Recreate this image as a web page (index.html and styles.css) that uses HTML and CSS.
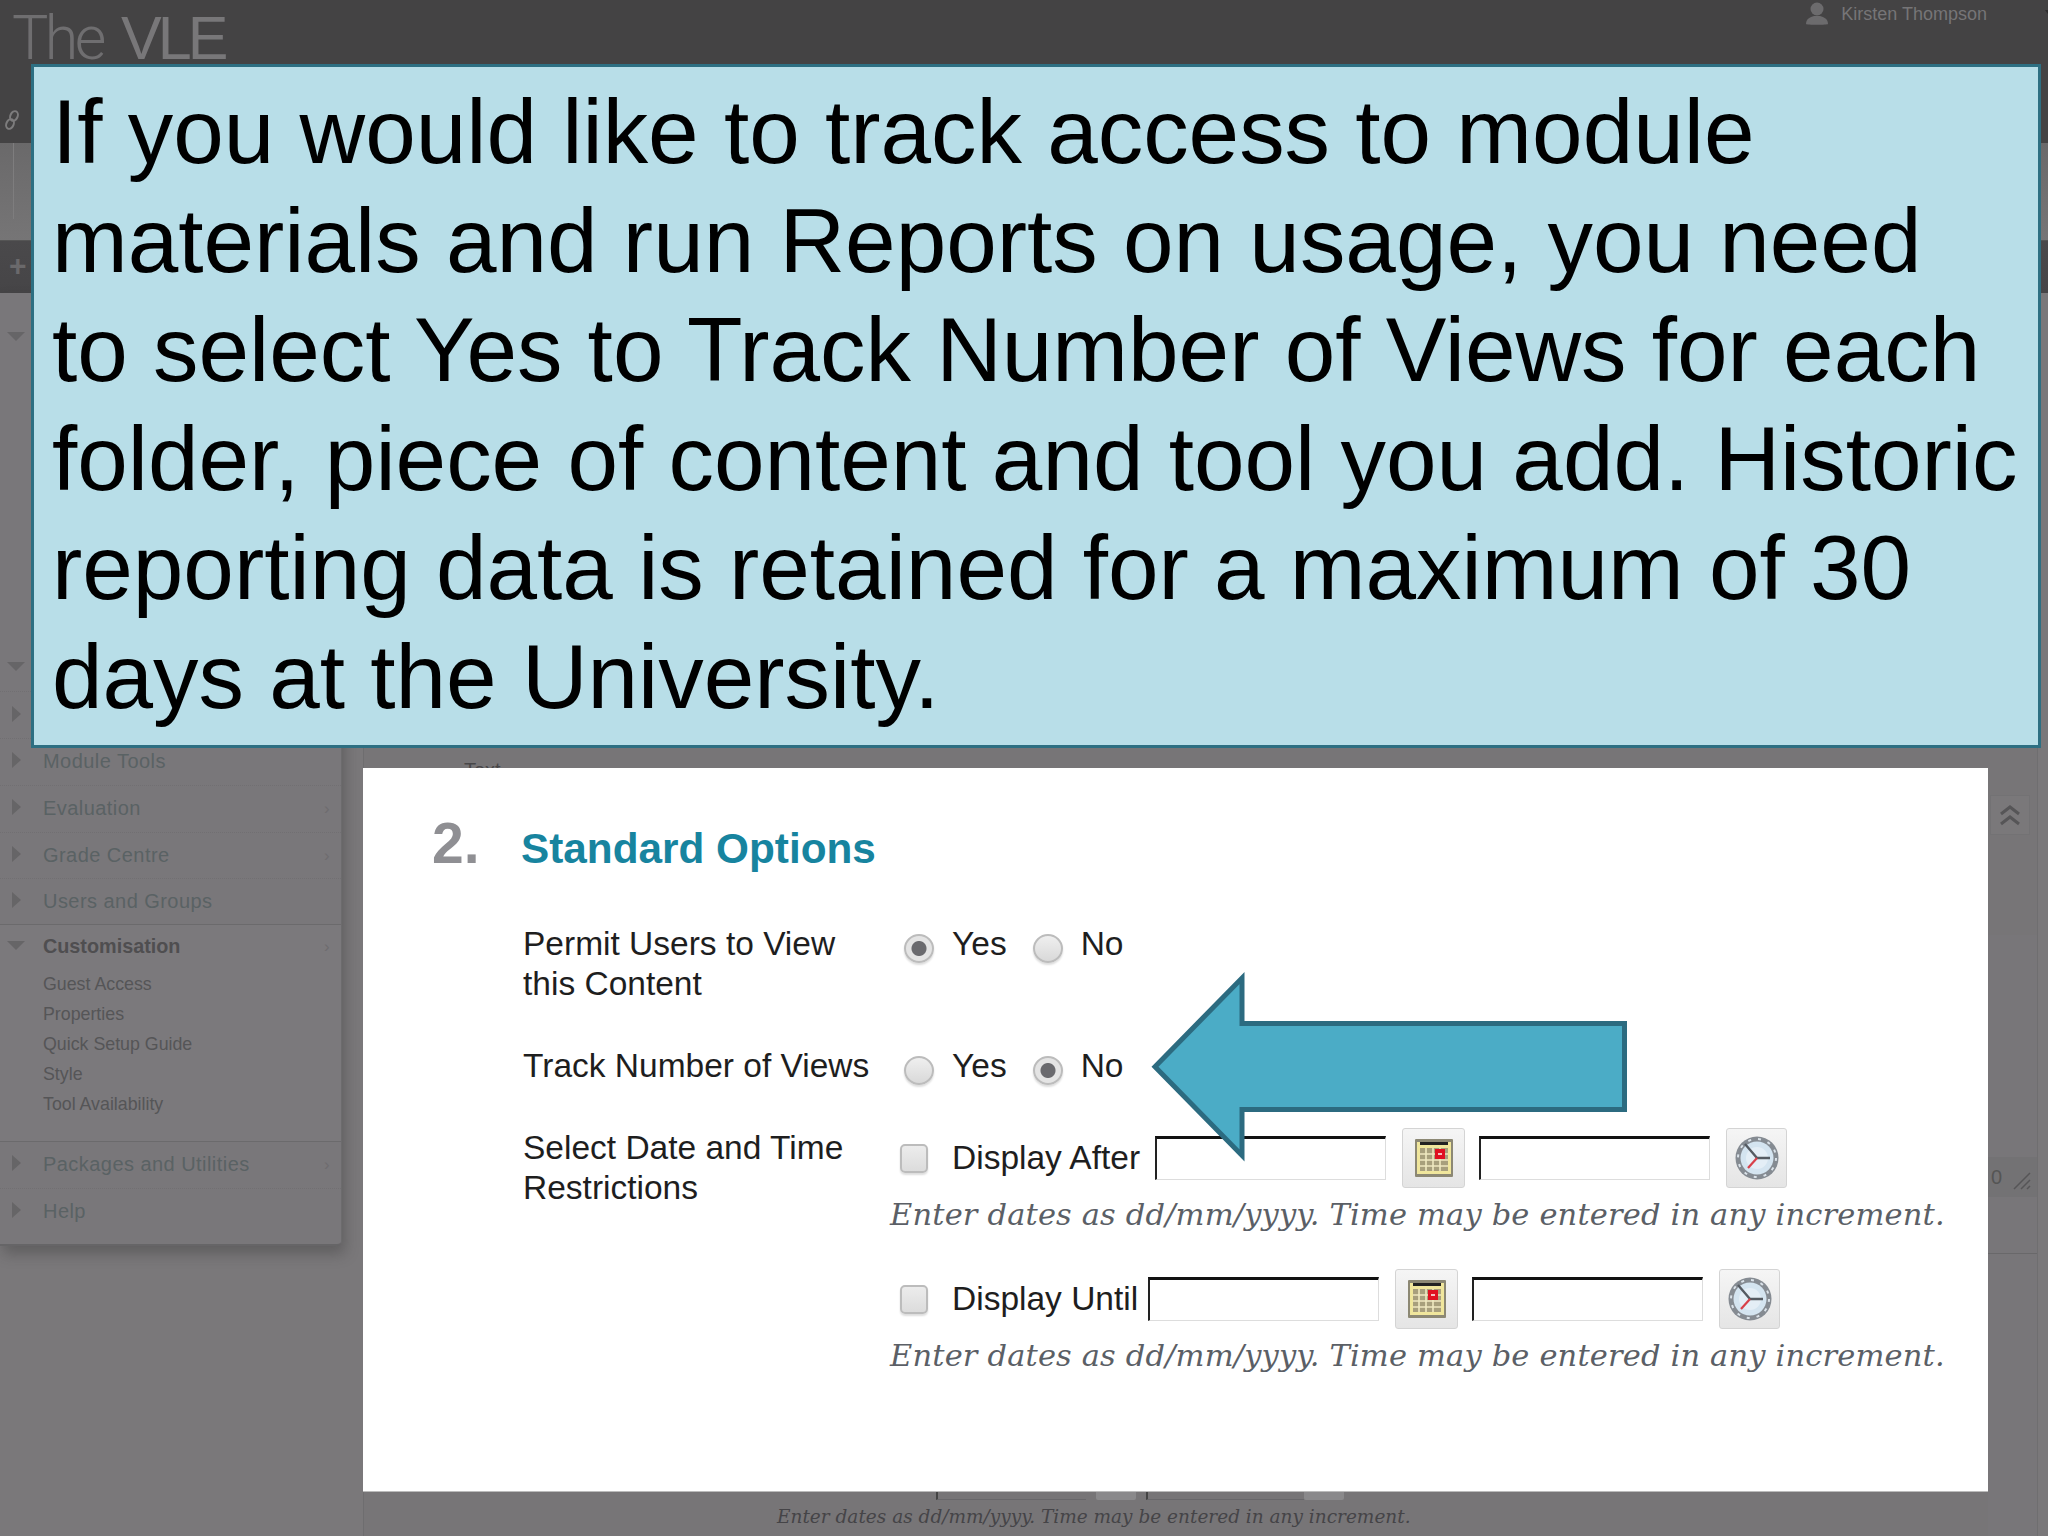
FILE: index.html
```html
<!DOCTYPE html>
<html lang="en">
<head>
<meta charset="utf-8">
<title>The VLE - Standard Options</title>
<link rel="stylesheet" href="styles.css">
</head>
<body>
<div class="slide">
  <header class="topbar">
    <div class="brand"><span class="brand-thin">The</span> <span class="brand-bold">VLE</span></div>
    <div class="user">
      <svg class="user-icon" viewBox="0 0 24 24"><circle cx="12" cy="8" r="6.5"/><path d="M1 23c0-5 4-7 8-8h6c4 1 8 3 8 8 0 1-22 1-22 0z"/></svg>
      <span>Kirsten Thompson</span>
      <i class="user-caret"></i>
    </div>
  </header>
  <div class="linkbar">
    <svg class="link-icon" viewBox="0 0 16 20"><g fill="none" stroke="#7d7c7d" stroke-width="2"><ellipse cx="10" cy="6" rx="3.6" ry="5" transform="rotate(25 10 6)"/><ellipse cx="6" cy="14" rx="3.6" ry="5" transform="rotate(25 6 14)"/></g></svg>
  </div>
  <div class="breadcrumb"><i class="crumb-line"></i></div>
  <div class="toolbar"><span class="plus">+</span></div>
  <div class="workspace">
    <nav class="sidebar">
      <div class="side-top"><i class="tri-down"></i></div>
      <div class="side-gap"></div>
      <div class="side-row"><i class="tri-down"></i></div>
      <div class="side-row"><i class="tri-right"></i></div>
      <div class="side-row"><i class="tri-right"></i><span>Module Tools</span></div>
      <div class="side-row"><i class="tri-right"></i><span>Evaluation</span><b class="more">›</b></div>
      <div class="side-row"><i class="tri-right"></i><span>Grade Centre</span><b class="more">›</b></div>
      <div class="side-row side-last"><i class="tri-right"></i><span>Users and Groups</span></div>
      <section class="side-open">
        <div class="side-head"><i class="tri-down"></i><strong>Customisation</strong><b class="more">›</b></div>
        <ul class="side-sub">
          <li>Guest Access</li>
          <li>Properties</li>
          <li>Quick Setup Guide</li>
          <li>Style</li>
          <li>Tool Availability</li>
        </ul>
      </section>
      <div class="side-row"><i class="tri-right"></i><span>Packages and Utilities</span><b class="more">›</b></div>
      <div class="side-row side-end"><i class="tri-right"></i><span>Help</span></div>
    </nav>
    <main class="main">
      <div class="content">
        <div class="ghost-label">Text</div>
        <div class="ghost-row">
          <i class="ghost-input"></i><i class="ghost-btn"></i><i class="ghost-input wide"></i><i class="ghost-btn flush"></i>
        </div>
        <div class="ghost-hint">Enter dates as dd/mm/yyyy. Time may be entered in any increment.</div>
      </div>
      <aside class="rail">
        <div class="rail-top">
          <div class="collapse">
            <svg viewBox="0 0 22 22"><path d="M2 10 11 3l9 7M2 20l9-7 9 7" fill="none" stroke="#565557" stroke-width="3"/></svg>
          </div>
        </div>
        <div class="rail-mid">
          <div class="rail-foot">
            <span class="count">0</span>
            <svg class="resize" viewBox="0 0 18 18"><path d="M1 17 17 1M8 17l9-9M14 17l3-3" fill="none" stroke="#565557" stroke-width="1.5"/></svg>
          </div>
          <div class="rail-line"></div>
        </div>
      </aside>
    </main>
  </div>

  <section class="panel">
    <h2 class="step"><span class="step-num">2.</span><span class="step-title">Standard Options</span></h2>
    <div class="form">
      <div class="form-label">Permit Users to View<br>this Content</div>
      <div class="opts">
        <label class="opt"><input class="radio" type="radio" name="permit" checked>Yes</label>
        <label class="opt"><input class="radio" type="radio" name="permit">No</label>
      </div>
      <div class="form-label">Track Number of Views</div>
      <div class="opts">
        <label class="opt"><input class="radio" type="radio" name="track">Yes</label>
        <label class="opt"><input class="radio" type="radio" name="track" checked>No</label>
      </div>
      <div class="form-label">Select Date and Time<br>Restrictions</div>
      <div class="dates">
        <div class="date-row">
          <label class="check"><input class="checkbox" type="checkbox">Display After</label>
          <input class="field" type="text" aria-label="After date">
          <button class="pick" type="button" aria-label="Calendar">
            <svg class="cal" viewBox="0 0 38 38"><rect width="38" height="38" rx="1" fill="#8c8874"/><rect x="2" y="3" width="34" height="32" fill="#f0e69c"/><rect x="5" y="9" width="28" height="23" fill="#a89f7c"/><path d="M5 3h28v3H5z" fill="#222"/><path d="M11 9v23M18 9v23M25 9v23M5 15h28M5 21h28M5 27h28" stroke="#efe8c0" stroke-width="1.6"/><rect x="20" y="10" width="10" height="10" fill="#e01020"/><rect x="23" y="14" width="4" height="2" fill="#f4c0c0"/></svg>
          </button>
          <input class="field" type="text" aria-label="After time">
          <button class="pick pick-clock" type="button" aria-label="Clock">
            <svg class="clock" viewBox="0 0 44 44"><circle cx="22" cy="22" r="21.5" fill="#858b92"/><circle cx="22" cy="22" r="19" fill="none" stroke="#dbe3ea" stroke-width="2" stroke-dasharray="3 7"/><circle cx="22" cy="22" r="16.5" fill="#d4e4f0"/><circle cx="22" cy="22" r="11" fill="#e4eef6"/><path d="M22 22 10 8M22 22h13" stroke="#555b62" stroke-width="2.4"/><path d="M22 22 13 32" stroke="#d8404a" stroke-width="2.2"/></svg>
          </button>
        </div>
        <p class="hint">Enter dates as dd/mm/yyyy. Time may be entered in any increment.</p>
        <div class="date-row date-until">
          <label class="check"><input class="checkbox" type="checkbox">Display Until</label>
          <input class="field" type="text" aria-label="Until date">
          <button class="pick" type="button" aria-label="Calendar">
            <svg class="cal" viewBox="0 0 38 38"><rect width="38" height="38" rx="1" fill="#8c8874"/><rect x="2" y="3" width="34" height="32" fill="#f0e69c"/><rect x="5" y="9" width="28" height="23" fill="#a89f7c"/><path d="M5 3h28v3H5z" fill="#222"/><path d="M11 9v23M18 9v23M25 9v23M5 15h28M5 21h28M5 27h28" stroke="#efe8c0" stroke-width="1.6"/><rect x="20" y="10" width="10" height="10" fill="#e01020"/><rect x="23" y="14" width="4" height="2" fill="#f4c0c0"/></svg>
          </button>
          <input class="field" type="text" aria-label="Until time">
          <button class="pick pick-clock" type="button" aria-label="Clock">
            <svg class="clock" viewBox="0 0 44 44"><circle cx="22" cy="22" r="21.5" fill="#858b92"/><circle cx="22" cy="22" r="19" fill="none" stroke="#dbe3ea" stroke-width="2" stroke-dasharray="3 7"/><circle cx="22" cy="22" r="16.5" fill="#d4e4f0"/><circle cx="22" cy="22" r="11" fill="#e4eef6"/><path d="M22 22 10 8M22 22h13" stroke="#555b62" stroke-width="2.4"/><path d="M22 22 13 32" stroke="#d8404a" stroke-width="2.2"/></svg>
          </button>
        </div>
        <p class="hint">Enter dates as dd/mm/yyyy. Time may be entered in any increment.</p>
      </div>
    </div>
  </section>

  <svg class="arrow" viewBox="0 0 484 196"><path d="M6 98.75 93 10v45.5h382.5v86H93v46z" fill="#4bacc6" stroke="#2c6b80" stroke-width="5"/></svg>

  <aside class="callout">If you would like to track access to module materials and run Reports on usage, you need<br>to select Yes to Track Number of Views for each folder, piece of content and tool you add. Historic reporting data is retained for a maximum of 30 days at the University.</aside>
</div>
</body>
</html>
```
FILE: styles.css
```css
* { box-sizing: border-box; }
html, body { margin: 0; padding: 0; }
body { width: 2048px; height: 1536px; overflow: hidden; background: #7a787a; font-family: "Liberation Sans", Arial, sans-serif; }
.slide { position: relative; width: 2048px; height: 1536px; display: flex; flex-direction: column; background: #7a787a; }

/* top of the dimmed page */
.topbar { height: 65px; flex: none; display: flex; justify-content: space-between; align-items: flex-start; background: #444344; }
.brand { padding: 0 0 0 12px; font-size: 61px; line-height: 76px; letter-spacing: -3.6px; color: #757476; white-space: nowrap; }
.brand-thin { font-family: Roboto, "Liberation Sans", sans-serif; font-weight: 300; color: #6f6e70; }
.brand-bold { font-weight: 400; color: #787779; letter-spacing: -4px; margin-left: 5px; }
.user { display: flex; align-items: center; gap: 12px; height: 28px; font-size: 18px; color: #767577; white-space: nowrap; margin-right: -4px; }
.user-icon { width: 24px; height: 24px; fill: #6c6b6d; flex: none; margin-top: -2px; }
.user-caret { width: 0; height: 0; margin-left: 46px; border: 6px solid transparent; border-top: 8px solid #2f2e2f; border-bottom: 0; margin-right: -5px; }
.linkbar { height: 78px; flex: none; background: #444344; padding: 45px 0 0 4px; }
.link-icon { display: block; width: 16px; height: 20px; }
.breadcrumb { height: 97px; flex: none; background: linear-gradient(#6a696a, #767576); padding-left: 13px; }
.crumb-line { display: block; width: 1px; height: 76px; background: #7e7d7e; }
.toolbar { height: 53px; flex: none; background: linear-gradient(#4a494b, #464547); padding-left: 9px; border-top: 1px solid #555; }
.plus { font-size: 30px; line-height: 50px; font-weight: 700; color: #6a696b; }

.workspace { flex: 1; display: flex; min-height: 0; }
.sidebar { width: 342px; height: 953px; flex: none; background: #79777a; border-right: 1px solid #6c6b6d; border-bottom: 2px solid #666567; border-radius: 0 0 5px 0; box-shadow: 3px 8px 14px rgba(50, 50, 50, .35); display: flex; flex-direction: column; color: #5a6264; font-size: 20px; letter-spacing: .45px; }
.side-top { height: 90px; display: flex; align-items: center; padding-left: 7px; }
.side-gap { height: 262.5px; }
.side-row { position: relative; height: 46.8px; display: flex; align-items: center; padding-left: 12px; border-bottom: 1px dotted #716f72; }
.side-row span { margin-left: 22px; }
.side-last { height: 44.3px; border-bottom: 0; }
.side-end { border-bottom: 0; }
.tri-right { width: 0; height: 0; flex: none; border-style: solid; border-width: 8px 0 8px 9px; border-color: transparent transparent transparent #666567; margin-top: -3px; }
.tri-down { width: 0; height: 0; flex: none; border-style: solid; border-width: 9px 9px 0; border-color: #666567 transparent transparent; margin-top: -3px; }
.side-row > .tri-down { margin-left: -5px; }
.more { margin-left: auto; margin-right: 11px; color: #6e6c6f; font-weight: 400; font-size: 17px; }
.side-open { border-top: 1px solid #6b6a6c; border-bottom: 1px solid #6b6a6c; height: 218px; background: #7b797c; }
.side-head { height: 44px; display: flex; align-items: center; padding-left: 7px; }
.side-head strong { margin-left: 18px; font-size: 19.8px; letter-spacing: 0; color: #4f4e50; }
.side-sub { margin: 0; padding: 0 0 0 43px; list-style: none; font-size: 17.8px; letter-spacing: 0; color: #555557; }
.side-sub li { height: 30px; line-height: 30px; }

.main { flex: 1; min-width: 0; display: flex; margin: 454px 10px 0 21px; border-left: 1px solid #6e6d6f; background: #777577; }
.content { flex: 1; min-width: 0; position: relative; }
.ghost-label { margin: 12px 0 0 100px; font-size: 20px; line-height: 22px; color: #484749; }
.ghost-row { display: flex; align-items: flex-end; height: 26px; margin: 693px 0 0 572px; }
.ghost-input { width: 150px; height: 20px; border-left: 2px solid #444; border-bottom: 1px solid #68676a; margin-right: 10px; }
.ghost-input.wide { width: 158px; margin-right: 0; margin-left: 10px; }
.ghost-btn { width: 40px; height: 26px; background: #8a898b; border-radius: 2px; }
.ghost-hint { margin: 4px 0 0 413px; font-family: "DejaVu Serif", serif; font-style: italic; font-size: 18.5px; line-height: 26px; color: #454447; white-space: nowrap; }
.rail { width: 50px; flex: none; display: flex; flex-direction: column; border-right: 1px solid #6f6e70; }
.rail-top { height: 188px; padding: 48px 0 0 2px; background: #777577; }
.collapse { width: 40px; height: 40px; display: flex; align-items: center; justify-content: center; background: #7a787a; border: 1px solid #737274; }
.collapse svg { width: 24px; height: 22px; }
.rail-mid { flex: 1; background: #787679; padding-top: 222px; }
.rail-foot { height: 40px; display: flex; align-items: center; justify-content: space-between; padding: 0 6px 0 3px; background: #737274; font-size: 20px; color: #555; }
.resize { width: 18px; height: 18px; margin-top: 8px; }
.rail-line { height: 1px; margin-top: 56px; background: #69686a; }

/* white screenshot panel */
.panel { position: absolute; left: 363px; top: 768px; width: 1625px; height: 724px; background: #fff; border-bottom: 1px solid #bbb; padding: 45px 0 0 69px; }
.step { display: flex; align-items: baseline; margin: 0; font-weight: 700; line-height: 60px; }
.step-num { width: 89px; font-size: 57px; color: #8f8f93; }
.step-title { font-size: 42.3px; color: #17849f; }
.form { display: grid; grid-template-columns: 367px auto; row-gap: 42px; margin: 45px 0 0 91px; font-size: 33.5px; line-height: 40px; color: #1e1e1e; }
.form-label { white-space: nowrap; }
.opts { display: flex; gap: 26px; padding-left: 14px; }
.opt { display: flex; gap: 18px; }
.radio { appearance: none; -webkit-appearance: none; width: 30px; height: 29px; margin: 10px 0 0; border-radius: 50%; border: 2px solid #bcbcbc; background: linear-gradient(#efefef, #d9d9d9); box-shadow: 0 2px 2px #ddd; }
.radio:checked { background: radial-gradient(circle, #6a6a6e 0 7px, #e4e4e4 8px); }
.dates { min-width: 0; }
.date-row { display: flex; align-items: center; gap: 16px; height: 60px; }
.date-until { margin-top: 34px; }
.check { display: flex; align-items: center; gap: 24px; margin-right: -1px; white-space: nowrap; padding-left: 10px; }
.date-until .check { margin-right: -6px; }
.checkbox { appearance: none; -webkit-appearance: none; width: 28px; height: 29px; margin: 0; border-radius: 5px; border: 2px solid #bcbcbc; background: linear-gradient(#ececec, #dcdcdc); box-shadow: 0 2px 2px #ddd; }
.field { width: 231px; height: 44px; padding: 0; background: #fff; border-style: solid; border-width: 3px 1px 1px 2px; border-color: #111 #ddd #ddd #222; }
.pick + .field { margin-left: -2px; }
.pick { width: 63px; height: 60px; padding: 0; display: flex; align-items: center; justify-content: center; background: linear-gradient(#f5f5f5, #e5e5e5); border: 1px solid #d4d4d4; border-radius: 3px; }
.pick-clock { width: 61px; }
.cal { width: 38px; height: 38px; }
.clock { width: 44px; height: 44px; }
.hint { margin: 7px 0 0; font-family: "DejaVu Serif", serif; font-style: italic; font-size: 30.5px; line-height: 40px; letter-spacing: .16px; color: #5b5f66; white-space: nowrap; }

.arrow { position: absolute; left: 1149px; top: 968px; width: 484px; height: 196px; }

/* instruction callout */
.callout { position: absolute; left: 31px; top: 64px; width: 2010px; height: 684px; padding: 10px 0 0 18px; background: #b8dee8; border: 3px solid #2d6f82; font-size: 90.9px; line-height: 109px; color: #000; }
```
